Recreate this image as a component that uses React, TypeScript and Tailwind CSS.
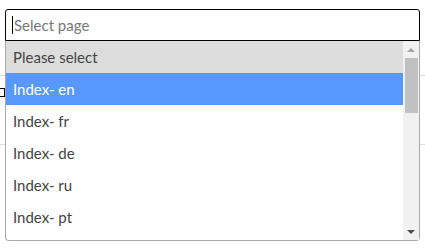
import { useState } from 'react';

const options = ['Index- en', 'Index- fr', 'Index- de', 'Index- ru', 'Index- pt'];

export default function App() {
  const [selected] = useState('Index- en');

  return (
    <div
      className="relative h-[248px] w-[425px] overflow-hidden bg-white text-[15px]"
      style={{ fontFamily: 'Lato, "Open Sans", sans-serif' }}
    >
      {/* page content behind the open dropdown */}
      <div className="pt-[9px]">
        <div className="mx-[5px] flex h-[32px] items-center rounded-t-[3px] border border-black bg-white pl-[6px]">
          <span className="mr-[1px] h-[18px] w-px bg-black" />
          <input
            className="w-full bg-transparent text-[#333] outline-none placeholder:text-[#777]"
            placeholder="Select page"
          />
        </div>
        <div className="mt-[34px] h-[70px] border-y border-[#dcdcdc] pt-[12px]">
          <span className="ml-[-4px] block h-[9px] w-[9px] border border-black bg-white" />
        </div>
      </div>

      {/* dropdown results */}
      <div className="absolute left-[5px] top-[41px] flex h-[200px] w-[415px] rounded-b-[4px] border border-t-0 border-[#aaa] bg-white">
        <ul className="flex-1 overflow-hidden">
          <li className="flex h-[32px] items-center bg-[#ddd] px-[7px] text-[#444]">Please select</li>
          {options.map((o) => (
            <li
              key={o}
              className={
                o === selected
                  ? 'flex h-[32px] items-center bg-[#5897fb] px-[7px] text-white'
                  : 'flex h-[32px] items-center px-[7px] text-[#444]'
              }
            >
              {o}
            </li>
          ))}
        </ul>
        <div className="flex w-[16px] flex-col items-center bg-[#f1f1f1]">
          <div className="flex h-[17px] items-center justify-center">
            <span className="h-0 w-0 border-x-[4px] border-b-[4px] border-x-transparent border-b-[#a3a3a3]" />
          </div>
          <div className="h-[55px] w-[13px] bg-[#c1c1c1]" />
          <div className="flex-1" />
          <div className="flex h-[17px] items-center justify-center">
            <span className="h-0 w-0 border-x-[4px] border-t-[4px] border-x-transparent border-t-[#505050]" />
          </div>
        </div>
      </div>
    </div>
  );
}
